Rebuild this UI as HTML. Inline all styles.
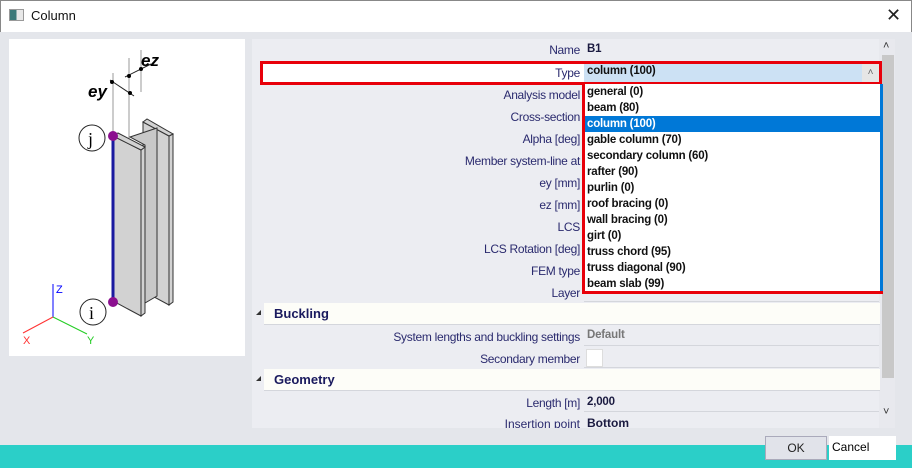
<!DOCTYPE html>
<html><head><meta charset="utf-8"><style>
*{margin:0;padding:0;box-sizing:border-box}
body{width:912px;height:468px;overflow:hidden;background:#e4e6eb;font-family:"Liberation Sans",sans-serif;font-size:12px;position:relative}
.a{position:absolute}
.lbl{position:absolute;right:332px;color:#2a2a6e;font-size:12px;letter-spacing:-0.3px;white-space:nowrap}
.val{position:absolute;left:587px;color:#1a1a40;font-weight:bold;font-size:11.5px;letter-spacing:-0.2px}
.it{position:absolute;left:0;width:295px;height:16px;line-height:16px;padding-left:2px;color:#111;font-weight:bold;font-size:11.5px;letter-spacing:-0.2px}
.sep{position:absolute;left:584px;width:295px;height:1px;background:#d4d6dc}
.hdr{position:absolute;left:264px;width:616px;height:22px;background:#fdfdf8;border-bottom:1px solid #d4d6dc;color:#1a1a5e;font-weight:bold;font-size:13px;line-height:22px;padding-left:10px}
.tri{position:absolute;left:256px;width:0;height:0;border-left:5px solid transparent;border-bottom:5px solid #333}
</style></head><body>
<div class="a" style="left:0;top:0;width:912px;height:32px;background:#fff;border:1px solid #888;border-bottom:none"></div>
<div class="a" style="left:9px;top:9px;width:15px;height:12px;border:1px solid #999;background:linear-gradient(90deg,#3c7a7a 0 50%,#e8e8e8 50%)"></div>
<div class="a" style="left:31px;top:8px;font-size:13px;color:#111">Column</div>
<div class="a" style="left:886px;top:5px;font-size:18px;color:#222">✕</div>

<div class="a" style="left:9px;top:39px;width:236px;height:317px;background:#fff"></div>
<svg class="a" style="left:9px;top:39px" width="236" height="317" viewBox="9 39 236 317">
<g stroke="#999" stroke-width="1"><line x1="113" y1="73" x2="113" y2="135"/><line x1="129" y1="58" x2="129" y2="140"/><line x1="141" y1="50" x2="141" y2="92"/></g>
<g stroke="#222" stroke-width="1"><line x1="110" y1="80" x2="134" y2="96"/><line x1="125" y1="77" x2="151" y2="64"/></g>
<g fill="#000"><circle cx="112" cy="82" r="2"/><circle cx="130" cy="93" r="2"/><circle cx="129" cy="76" r="2"/><circle cx="141" cy="69" r="2"/></g>
<text x="141" y="66" font-size="17" font-style="italic" font-weight="bold" font-family="Liberation Sans">ez</text>
<text x="88" y="97" font-size="17" font-style="italic" font-weight="bold" font-family="Liberation Sans">ey</text>
<g stroke="#333" stroke-width="1" fill="#d2d2d2">
<polygon points="143,122 169,136 169,305 143,291"/>
<polygon points="169,136 173,134 173,302 169,305"/>
<polygon points="143,122 147,119 173,134 169,136"/>
<polygon points="130,137 157,128 157,296 145,303 145,145" fill="#c8c8c8"/>
<polygon points="113,136 141,150 141,316 113,301"/>
<polygon points="141,150 145,147 145,313 141,316"/>
<polygon points="113,136 118,133 145,147 141,150"/>
</g>
<line x1="113" y1="136" x2="113" y2="301" stroke="#1a1aa0" stroke-width="3"/>
<circle cx="113" cy="136" r="5" fill="#8b0f8f"/><circle cx="113" cy="302" r="5" fill="#8b0f8f"/>
<circle cx="92" cy="138" r="13" fill="#fff" stroke="#222"/><text x="88" y="145" font-size="18" font-family="Liberation Serif">j</text>
<circle cx="93" cy="312" r="13" fill="#fff" stroke="#222"/><text x="89" y="319" font-size="18" font-family="Liberation Serif">i</text>
<line x1="53" y1="317" x2="53" y2="284" stroke="#00f"/><line x1="53" y1="317" x2="23" y2="333" stroke="#f33"/><line x1="53" y1="317" x2="87" y2="334" stroke="#2c2"/>
<text x="56" y="293" font-size="11" fill="#00f" font-family="Liberation Sans">Z</text>
<text x="23" y="344" font-size="11" fill="#f33" font-family="Liberation Sans">X</text>
<text x="87" y="344" font-size="11" fill="#2c2" font-family="Liberation Sans">Y</text>
</svg>

<div class="a" style="left:252px;top:39px;width:628px;height:389px;background:#ecedf2"></div>
<div class="a" style="left:879px;top:39px;width:16px;height:389px;background:#e8e9ee"></div>
<div class="a" style="left:882px;top:55px;width:12px;height:323px;background:#c8c8c8"></div>
<div class="a" style="left:883px;top:40px;font-size:11px;color:#333">˄</div>
<div class="a" style="left:883px;top:406px;font-size:11px;color:#333">˅</div>

<div class="lbl" style="top:43px">Name</div><div class="val" style="top:43px">B1</div>
<div class="a" style="left:260px;top:61px;width:622px;height:24px;border:3px solid #e8000a;background:#fff"></div>
<div class="a" style="left:584px;top:64px;width:278px;height:18px;background:#cce1f4"></div>
<div class="a" style="left:862px;top:64px;width:17px;height:18px;background:#e6e6e6;color:#666;font-size:10px;text-align:center;line-height:18px">˄</div>
<div class="lbl" style="top:66px">Type</div><div class="val" style="top:65px;color:#111">column (100)</div>
<div class="lbl" style="top:88px">Analysis model</div>
<div class="lbl" style="top:110px">Cross-section</div>
<div class="lbl" style="top:132px">Alpha [deg]</div>
<div class="lbl" style="top:154px">Member system-line at</div>
<div class="lbl" style="top:176px">ey [mm]</div>
<div class="lbl" style="top:198px">ez [mm]</div>
<div class="lbl" style="top:220px">LCS</div>
<div class="lbl" style="top:242px">LCS Rotation [deg]</div>
<div class="lbl" style="top:264px">FEM type</div>
<div class="lbl" style="top:286px">Layer</div>
<div class="sep" style="top:301px"></div>

<div class="a" style="left:582px;top:84px;width:301px;height:210px;border:3px solid #e8000a;border-top:none;background:#fff">
<div class="a" style="left:295px;top:0;width:3px;height:207px;background:#0078d7"></div>
<div class="it" style="top:0">general (0)</div>
<div class="it" style="top:16px">beam (80)</div>
<div class="it" style="top:32px;background:#0078d7;color:#fff">column (100)</div>
<div class="it" style="top:48px">gable column (70)</div>
<div class="it" style="top:64px">secondary column (60)</div>
<div class="it" style="top:80px">rafter (90)</div>
<div class="it" style="top:96px">purlin (0)</div>
<div class="it" style="top:112px">roof bracing (0)</div>
<div class="it" style="top:128px">wall bracing (0)</div>
<div class="it" style="top:144px">girt (0)</div>
<div class="it" style="top:160px">truss chord (95)</div>
<div class="it" style="top:176px">truss diagonal (90)</div>
<div class="it" style="top:192px">beam slab (99)</div>
</div>

<div class="tri" style="top:310px"></div>
<div class="hdr" style="top:303px">Buckling</div>
<div class="lbl" style="top:330px">System lengths and buckling settings</div><div class="val" style="top:329px;color:#777">Default</div>
<div class="sep" style="top:345px"></div>
<div class="a" style="left:586px;top:349px;width:17px;height:18px;background:#fff;border:1px solid #ddd"></div>
<div class="lbl" style="top:352px">Secondary member</div>
<div class="sep" style="top:367px"></div>
<div class="tri" style="top:376px"></div>
<div class="hdr" style="top:369px">Geometry</div>
<div class="lbl" style="top:396px">Length [m]</div><div class="val" style="top:396px">2,000</div>
<div class="sep" style="top:411px"></div>
<div class="a" style="left:252px;top:412px;width:628px;height:16px;overflow:hidden">
<div class="a" style="right:300px;top:5px;color:#2a2a6e">Insertion point</div>
<div class="a" style="left:335px;top:4px;color:#1a1a40;font-weight:bold">Bottom</div></div>

<div class="a" style="left:0;top:445px;width:912px;height:23px;background:#2bcfc8"></div>
<div class="a" style="left:765px;top:436px;width:62px;height:24px;background:#e1e3ea;border:1px solid #aab;text-align:center;line-height:22px;color:#222">OK</div>
<div class="a" style="left:829px;top:436px;width:67px;height:24px;background:#fff;line-height:22px;padding-left:3px;color:#000">Cancel</div>
</body></html>
